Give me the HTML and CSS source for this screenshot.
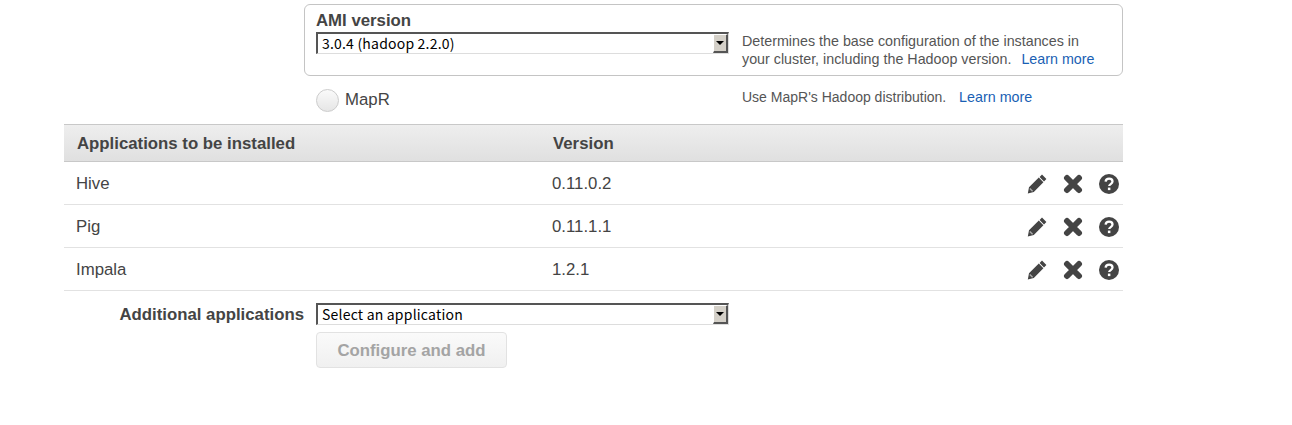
FILE: index.html
```html
<!DOCTYPE html>
<html lang="en">
<head>
    <meta charset="UTF-8">
    <title>Software configuration</title>
    <link rel="stylesheet" href="styles.css">
</head>
<body>
    <div class="page">
        <div class="ami-box">
            <div class="ami-left">
                <div class="ami-label">AMI version</div>
                <div class="select">
                    <span class="select-text">3.0.4 (hadoop 2.2.0)</span>
                    <span class="select-arrow"></span>
                </div>
            </div>
            <div class="help ami-help">
                Determines the base configuration of the instances in<br>
                your cluster, including the Hadoop version. <a href="#">Learn more</a>
            </div>
        </div>

        <div class="mapr-row">
            <div class="mapr-left">
                <span class="radio"></span>
                <span class="mapr-label">MapR</span>
            </div>
            <div class="help mapr-help">Use MapR's Hadoop distribution. <a href="#">Learn more</a></div>
        </div>

        <div class="app-head">
            <div class="col-name">Applications to be installed</div>
            <div class="col-version">Version</div>
        </div>

        <div class="app-row">
            <div class="col-name">Hive</div>
            <div class="col-version">0.11.0.2</div>
            <div class="actions">
                <svg class="icon" viewBox="0 0 20 20"><use href="#pencil"/></svg>
                <svg class="icon" viewBox="0 0 20 20"><use href="#cross"/></svg>
                <svg class="icon" viewBox="0 0 20 20"><use href="#question"/></svg>
            </div>
        </div>
        <div class="app-row">
            <div class="col-name">Pig</div>
            <div class="col-version">0.11.1.1</div>
            <div class="actions">
                <svg class="icon" viewBox="0 0 20 20"><use href="#pencil"/></svg>
                <svg class="icon" viewBox="0 0 20 20"><use href="#cross"/></svg>
                <svg class="icon" viewBox="0 0 20 20"><use href="#question"/></svg>
            </div>
        </div>
        <div class="app-row">
            <div class="col-name">Impala</div>
            <div class="col-version">1.2.1</div>
            <div class="actions">
                <svg class="icon" viewBox="0 0 20 20"><use href="#pencil"/></svg>
                <svg class="icon" viewBox="0 0 20 20"><use href="#cross"/></svg>
                <svg class="icon" viewBox="0 0 20 20"><use href="#question"/></svg>
            </div>
        </div>

        <div class="add-row">
            <div class="add-label">Additional applications</div>
            <div class="add-controls">
                <div class="select">
                    <span class="select-text">Select an application</span>
                    <span class="select-arrow"></span>
                </div>
                <button class="add-button" disabled>Configure and add</button>
            </div>
        </div>
    </div>

    <svg class="icon-defs" width="0" height="0">
        <symbol id="pencil" viewBox="0 0 20 20">
            <path d="M15 .6l4.400 4.400-2.400 2.400-4.400-4.400zM11.800 3.600l4.600 4.600-9.600 9.800-6 1.400 1.200-6.200z" fill="#444"/>
            <path d="M2.800 14.400l2.800 2.800" stroke="#aaa" stroke-width="1.400"/>
        </symbol>
        <symbol id="cross" viewBox="0 0 20 20">
            <path d="M4 4l12 12M16 4L4 16" stroke="#444" stroke-width="6" stroke-linecap="round"/>
        </symbol>
        <symbol id="question" viewBox="0 0 20 20">
            <circle cx="10" cy="10" r="10" fill="#444"/>
            <path d="M6.600 7.600c.2-1.900 1.600-3 3.500-3 2 0 3.400 1.200 3.400 2.900 0 2.600-3.300 2.500-3.300 4.600" fill="none" stroke="#fff" stroke-width="2.300"/>
            <rect x="8.900" y="13.600" width="2.500" height="2.500" fill="#fff"/>
        </symbol>
    </svg>
</body>
</html>
```

FILE: styles.css
```css
body {
    margin: 0;
    background: #fff;
    font-family: "Liberation Sans", Arial, sans-serif;
    color: #444;
}

.page {
    width: 1059px;
    margin-left: 64px;
    padding-top: 4px;
}

a {
    color: #1a5fb4;
    text-decoration: none;
    margin-left: 6px;
}

.help {
    font-size: 14.3px;
    line-height: 18px;
    color: #555;
}

/* AMI box */
.ami-box {
    box-sizing: border-box;
    display: flex;
    width: 819px;
    height: 72px;
    margin-left: 240px;
    padding: 7px 11px 0;
    border: 1px solid #c4c4c4;
    border-radius: 6px;
}

.ami-label {
    font-size: 16.8px;
    font-weight: bold;
    line-height: 18px;
    margin-bottom: 2px;
}

.ami-help {
    margin: 20px 0 0 13px;
}

/* fake windows select */
.select {
    box-sizing: border-box;
    display: flex;
    justify-content: space-between;
    width: 413px;
    height: 22px;
    border-top: 2px solid #555;
    border-left: 2px solid #555;
    border-right: 1px solid #ddd;
    border-bottom: 1px solid #ddd;
    background: #fff;
}

.select-text {
    padding-left: 4px;
    font-family: "Noto Sans CJK JP", "Liberation Sans", sans-serif;
    font-size: 14px;
    letter-spacing: 0.2px;
    line-height: 18px;
    color: #000;
}

.select-arrow {
    box-sizing: border-box;
    position: relative;
    width: 15px;
    height: 19px;
    background: #d4d0c8;
    border-right: 2px solid #555;
    border-bottom: 2px solid #555;
    border-top: 1px solid #fff;
    border-left: 1px solid #fff;
}

.select-arrow::after {
    content: "";
    position: absolute;
    left: 2px;
    top: 6px;
    border-left: 4px solid transparent;
    border-right: 4px solid transparent;
    border-top: 4px solid #000;
}

/* MapR */
.mapr-row {
    display: flex;
    align-items: center;
    height: 48px;
}

.mapr-left {
    display: flex;
    align-items: center;
    gap: 6px;
    width: 426px;
    margin-left: 252px;
    margin-top: 2px;
    padding-bottom: 2px;
}

.mapr-help {
    margin-top: -6px;
    font-size: 14px;
}

.mapr-help a {
    margin-left: 9px;
    font-size: 14.3px;
}

.radio {
    box-sizing: border-box;
    width: 23px;
    height: 23px;
    border: 1px solid #ccc;
    border-radius: 50%;
    background: linear-gradient(#fafafa, #e6e6e6);
}

.mapr-label {
    font-size: 16.8px;
}

/* table */
.app-head {
    box-sizing: border-box;
    display: flex;
    align-items: center;
    height: 38px;
    padding-top: 2px;
    border-top: 1px solid #c8c8c8;
    border-bottom: 1px solid #c8c8c8;
    background: linear-gradient(#eee, #e0e0e0);
    font-size: 16.8px;
    font-weight: bold;
}

.app-row {
    box-sizing: border-box;
    display: flex;
    align-items: center;
    height: 43px;
    padding-top: 2px;
    border-bottom: 1px solid #e2e2e2;
    font-size: 16.8px;
}

.col-name {
    width: 476px;
    padding-left: 12px;
}

.app-head .col-name {
    padding-left: 13px;
    width: 476px;
}

.actions {
    display: flex;
    gap: 16px;
    margin-left: auto;
    margin-right: 4px;
}

.col-version {
    width: 300px;
}

.icon {
    display: block;
    width: 20px;
    height: 20px;
}

.icon-defs {
    position: absolute;
}

/* additional applications */
.add-row {
    display: flex;
    padding-top: 12px;
}

.add-label {
    width: 240px;
    text-align: right;
    font-size: 16.8px;
    font-weight: bold;
    line-height: 24px;
}

.add-controls {
    display: flex;
    flex-direction: column;
    align-items: flex-start;
    gap: 7px;
    margin-left: 12px;
}

.add-button {
    box-sizing: border-box;
    width: 191px;
    height: 36px;
    padding-top: 3px;
    border: 1px solid #e2e2e2;
    border-radius: 4px;
    background: linear-gradient(#fafafa, #f0f0f0);
    font-family: "Liberation Sans", Arial, sans-serif;
    font-size: 16.8px;
    font-weight: bold;
    color: #a4a4a4;
}
```
